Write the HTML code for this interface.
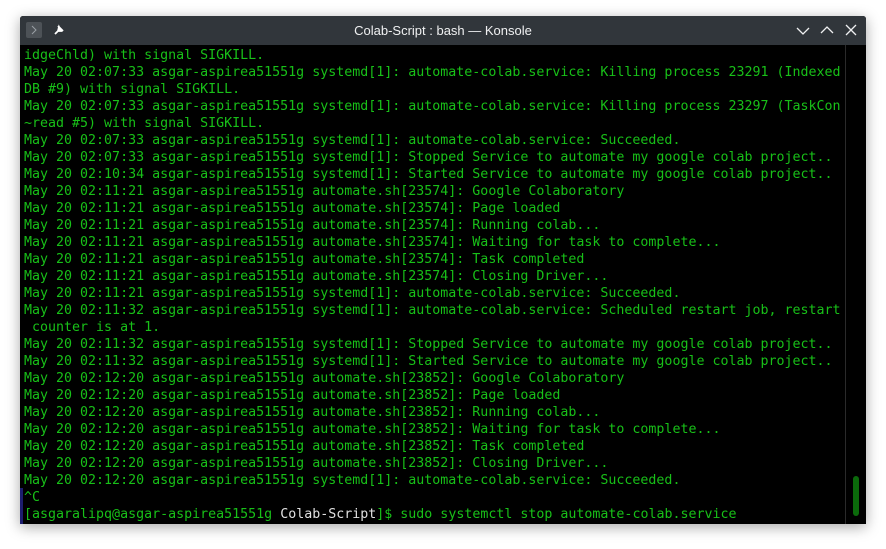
<!DOCTYPE html>
<html><head><style>
body{margin:0;width:886px;height:549px;background:#fff;position:relative;overflow:hidden;font-family:"Liberation Sans",sans-serif}
.win{position:absolute;left:20px;top:16px;width:846px;height:508px;background:#000;box-shadow:0 3px 14px rgba(0,0,0,.35);border-radius:3px 3px 0 0;overflow:hidden}
.tb{position:absolute;left:0;top:0;width:846px;height:29px;background:#31363b;color:#eff0f1;font-size:13px;text-align:center;line-height:29px}
.term{position:absolute;left:4px;top:31px;font-family:"DejaVu Sans Mono",monospace;font-size:13.3px;line-height:17px;color:#18c018;white-space:pre}
.w{color:#e0e0e0}
.div{position:absolute;left:825px;top:29px;width:1px;height:479px;background:#2a2a2a}
.thumb{position:absolute;left:833px;top:460px;width:6px;height:40px;border-radius:3px;background:#0b6a0b}
.blue{position:absolute;left:0;top:472px;width:3px;height:36px;background:#1d1d6e}
</style></head><body>
<div class="win">
<div class="tb">Colab-Script : bash — Konsole
<div style="position:absolute;left:6px;top:6px;width:16px;height:16px;background:#4d5257;border-radius:2px"></div>
<svg style="position:absolute;left:8px;top:8px" width="12" height="12"><path d="M4 2l4 4-4 4" stroke="#9aa0a6" fill="none"/></svg>
<svg style="position:absolute;left:32px;top:7px" width="14" height="14"><path d="M3 11l4-4M6 3l5 5M7 4l-1 4 3 0z" stroke="#fff" stroke-width="1.8" fill="#fff"/></svg>
<svg style="position:absolute;left:776px;top:9px" width="14" height="12"><path d="M1 3l6 6 6-6" stroke="#eff0f1" fill="none" stroke-width="1.3"/></svg>
<svg style="position:absolute;left:800px;top:8px" width="14" height="12"><path d="M1 9l6-6 6 6" stroke="#eff0f1" fill="none" stroke-width="1.3"/></svg>
<svg style="position:absolute;left:825px;top:8px" width="12" height="12"><path d="M1 1l10 10M11 1l-10 10" stroke="#eff0f1" stroke-width="1.3"/></svg>
</div>
<div class="div"></div><div class="thumb"></div><div class="blue"></div>
<div class="term">idgeChld) with signal SIGKILL.
May 20 02:07:33 asgar-aspirea51551g systemd[1]: automate-colab.service: Killing process 23291 (Indexed
DB #9) with signal SIGKILL.
May 20 02:07:33 asgar-aspirea51551g systemd[1]: automate-colab.service: Killing process 23297 (TaskCon
~read #5) with signal SIGKILL.
May 20 02:07:33 asgar-aspirea51551g systemd[1]: automate-colab.service: Succeeded.
May 20 02:07:33 asgar-aspirea51551g systemd[1]: Stopped Service to automate my google colab project..
May 20 02:10:34 asgar-aspirea51551g systemd[1]: Started Service to automate my google colab project..
May 20 02:11:21 asgar-aspirea51551g automate.sh[23574]: Google Colaboratory
May 20 02:11:21 asgar-aspirea51551g automate.sh[23574]: Page loaded
May 20 02:11:21 asgar-aspirea51551g automate.sh[23574]: Running colab...
May 20 02:11:21 asgar-aspirea51551g automate.sh[23574]: Waiting for task to complete...
May 20 02:11:21 asgar-aspirea51551g automate.sh[23574]: Task completed
May 20 02:11:21 asgar-aspirea51551g automate.sh[23574]: Closing Driver...
May 20 02:11:21 asgar-aspirea51551g systemd[1]: automate-colab.service: Succeeded.
May 20 02:11:32 asgar-aspirea51551g systemd[1]: automate-colab.service: Scheduled restart job, restart
 counter is at 1.
May 20 02:11:32 asgar-aspirea51551g systemd[1]: Stopped Service to automate my google colab project..
May 20 02:11:32 asgar-aspirea51551g systemd[1]: Started Service to automate my google colab project..
May 20 02:12:20 asgar-aspirea51551g automate.sh[23852]: Google Colaboratory
May 20 02:12:20 asgar-aspirea51551g automate.sh[23852]: Page loaded
May 20 02:12:20 asgar-aspirea51551g automate.sh[23852]: Running colab...
May 20 02:12:20 asgar-aspirea51551g automate.sh[23852]: Waiting for task to complete...
May 20 02:12:20 asgar-aspirea51551g automate.sh[23852]: Task completed
May 20 02:12:20 asgar-aspirea51551g automate.sh[23852]: Closing Driver...
May 20 02:12:20 asgar-aspirea51551g systemd[1]: automate-colab.service: Succeeded.
^C
[asgaralipq@asgar-aspirea51551g <span class="w">Colab-Script</span>]$ sudo systemctl stop automate-colab.service</div>
</div>
</body></html>
